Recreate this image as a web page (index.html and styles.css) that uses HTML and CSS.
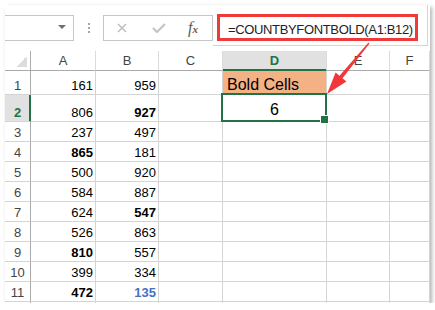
FILE: index.html
```html
<!DOCTYPE html>
<html lang="en">
<head>
    <meta charset="UTF-8">
    <title>COUNTBYFONTBOLD</title>
    <link rel="stylesheet" href="styles.css">
</head>
<body>
    <div class="frame">
        <!-- Name box, fx buttons and formula bar -->
        <div class="toolbar">
            <div class="namebox"><span class="caret"></span></div>
            <div class="grip"><i></i><i></i><i></i></div>
            <div class="fxbox">
                <svg class="ico-x" width="10" height="10" viewBox="0 0 10 10">
                    <path d="M1 1 L9 9 M9 1 L1 9" stroke="#bcbcbc" stroke-width="1.4" fill="none"/>
                </svg>
                <svg class="ico-ok" width="14" height="10" viewBox="0 0 14 10">
                    <path d="M1 5 L5 9 L13 1" stroke="#c4c4c4" stroke-width="2.2" fill="none"/>
                </svg>
                <span class="fx"><i>f</i><small>x</small></span>
            </div>
            <div class="formula-bar">
                <div class="formula">=COUNTBYFONTBOLD(A1:B12)</div>
            </div>
        </div>

        <!-- Worksheet grid -->
        <div class="sheet">
            <div class="c hd corner"></div><div class="c hd">A</div><div class="c hd">B</div><div class="c hd">C</div><div class="c hd on">D</div><div class="c hd">E</div><div class="c hd">F</div>

            <div class="c rh">1</div><div class="c n">161</div><div class="c n">959</div><div class="c"></div><div class="c label">Bold Cells</div><div class="c"></div><div class="c"></div>
            <div class="c rh on">2</div><div class="c n">806</div><div class="c n b">927</div><div class="c"></div><div class="c result cur">6</div><div class="c"></div><div class="c"></div>
            <div class="c rh">3</div><div class="c n">237</div><div class="c n">497</div><div class="c"></div><div class="c"></div><div class="c"></div><div class="c"></div>
            <div class="c rh">4</div><div class="c n b">865</div><div class="c n">181</div><div class="c"></div><div class="c"></div><div class="c"></div><div class="c"></div>
            <div class="c rh">5</div><div class="c n">500</div><div class="c n">920</div><div class="c"></div><div class="c"></div><div class="c"></div><div class="c"></div>
            <div class="c rh">6</div><div class="c n">584</div><div class="c n">887</div><div class="c"></div><div class="c"></div><div class="c"></div><div class="c"></div>
            <div class="c rh">7</div><div class="c n">624</div><div class="c n b">547</div><div class="c"></div><div class="c"></div><div class="c"></div><div class="c"></div>
            <div class="c rh">8</div><div class="c n">526</div><div class="c n">863</div><div class="c"></div><div class="c"></div><div class="c"></div><div class="c"></div>
            <div class="c rh">9</div><div class="c n b">810</div><div class="c n">557</div><div class="c"></div><div class="c"></div><div class="c"></div><div class="c"></div>
            <div class="c rh">10</div><div class="c n">399</div><div class="c n">334</div><div class="c"></div><div class="c"></div><div class="c"></div><div class="c"></div>
            <div class="c rh">11</div><div class="c n b">472</div><div class="c n b blue">135</div><div class="c"></div><div class="c"></div><div class="c"></div><div class="c"></div>
            <div class="c rh"></div><div class="c"></div><div class="c"></div><div class="c"></div><div class="c"></div><div class="c"></div><div class="c"></div>
        </div>

        <!-- Red callout arrow from the formula to the result -->
        <svg class="arrow" width="425" height="298" viewBox="5 5 425 298">
            <polygon points="327,94 335.6,72.5 339.5,75.7 368.5,42.6 369.5,43.4 342.5,78.3 346.4,81.5" fill="#f0383b"/>
        </svg>
    </div>
</body>
</html>
```

FILE: styles.css
```css
* {
    margin: 0;
    padding: 0;
    box-sizing: border-box;
}

body {
    background: #fff;
    font-family: 'Liberation Sans', Arial, sans-serif;
    color: #000;
}

.frame {
    position: relative;
    width: 425px;
    height: 298px;
    margin: 5px 0 0 5px;
    background: #fff;
    overflow: hidden;
    box-shadow: 2px 2px 4px rgba(0, 0, 0, 0.3);
}

/* Toolbar */
.toolbar {
    display: flex;
    align-items: flex-start;
    height: 46px;
}

.namebox {
    display: flex;
    justify-content: flex-end;
    width: 69px;
    height: 26px;
    margin-top: 10px;
    padding: 9px 7px 0 0;
    border: 1px solid #c6c6c6;
    border-left: none;
}

.caret {
    width: 0;
    height: 0;
    border-left: 4px solid transparent;
    border-right: 4px solid transparent;
    border-top: 4px solid #707070;
}

.grip {
    display: flex;
    flex-direction: column;
    align-items: center;
    gap: 2px;
    width: 29px;
    padding-top: 18px;
}

.grip i {
    width: 2px;
    height: 2px;
    background: #a8a8a8;
}

.fxbox {
    display: flex;
    align-items: center;
    width: 110px;
    height: 26px;
    margin-top: 10px;
    border: 1px solid #c6c6c6;
}

.ico-x {
    margin-left: 13px;
}

.ico-ok {
    margin-left: 25px;
}

.fx {
    margin-left: 22px;
    font-family: 'Liberation Serif', serif;
    color: #5a5a5a;
}

.fx i {
    font-size: 16px;
}

.fx small {
    font-size: 11px;
    font-style: italic;
    font-weight: bold;
}

.formula-bar {
    width: 215px;
    height: 41px;
    border-right: 1px solid #d4d4d4;
    border-bottom: 1px solid #d4d4d4;
}

.formula {
    width: 201px;
    height: 27px;
    margin: 9px 0 0 4px;
    padding: 4px 0 0 8px;
    border: 3px solid #ef3a3a;
    font-size: 13px;
    line-height: 17px;
    letter-spacing: -0.35px;
    color: #222;
    white-space: nowrap;
}

/* Sheet */
.sheet {
    display: grid;
    grid-template-columns: 26px 65px 63px 64px 104px 63px 40px;
    grid-template-rows: 20px 24px 27px;
    grid-auto-rows: 20px;
}

.c {
    display: flex;
    align-items: flex-end;
    padding: 0 2px 1px;
    border-right: 1px solid #d4d4d4;
    border-bottom: 1px solid #d4d4d4;
    font-size: 13px;
    line-height: 15px;
}

.n {
    justify-content: flex-end;
}

.b {
    font-weight: bold;
}

.blue {
    color: #4472c4;
}

.hd {
    align-items: center;
    justify-content: center;
    padding: 0;
    color: #444;
    border-right-color: #dadada;
    border-bottom-color: #ababab;
}

.hd.on {
    background: #e1e1e1;
    color: #217346;
    font-weight: bold;
    border-bottom-color: #217346;
    box-shadow: inset 0 -1px 0 #217346;
}

.corner {
    border-right-color: #ababab;
    background: linear-gradient(135deg, transparent 50%, #dcdcdc 50%) no-repeat right 3px bottom 3px / 11px 11px;
}

.rh {
    justify-content: center;
    color: #444;
    border-right-color: #ababab;
}

.rh.on {
    background: #e1e1e1;
    color: #217346;
    font-weight: bold;
    border-right-color: #217346;
    box-shadow: inset -1px 0 0 #217346;
}

.label {
    padding: 0 0 1px 4px;
    background: #f4b183;
    font-size: 16px;
    line-height: 16px;
}

.result {
    justify-content: center;
    padding-bottom: 3px;
    font-size: 16px;
    line-height: 16px;
}

/* Active cell outline and fill handle */
.cur {
    position: relative;
}

.cur::before {
    content: "";
    position: absolute;
    top: -2px;
    left: -2px;
    right: -1px;
    bottom: -1px;
    border: 2px solid #217346;
}

.cur::after {
    content: "";
    position: absolute;
    right: -3px;
    bottom: -3px;
    width: 7px;
    height: 7px;
    background: #217346;
    border: 1px solid #fff;
}

.arrow {
    position: absolute;
    top: 0;
    left: 0;
}
```
